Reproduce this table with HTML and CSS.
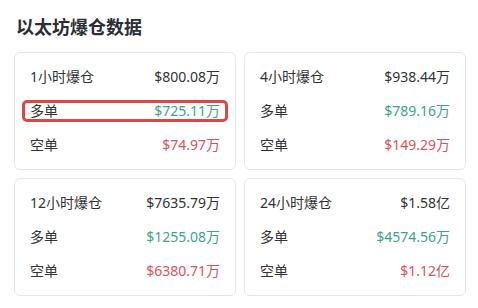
FILE: index.html
```html
<!DOCTYPE html>
<html lang="zh">
<head>
<meta charset="utf-8">
<link rel="stylesheet" href="styles.css">
</head>
<body>
<div class="page">
  <h1 class="title">以太坊爆仓数据</h1>
  <div class="grid">
    <div class="card">
      <div class="row"><span class="label">1小时爆仓</span><span class="val">$800.08万</span></div>
      <div class="row hl"><span class="label">多单</span><span class="val up">$725.11万</span></div>
      <div class="row"><span class="label">空单</span><span class="val down">$74.97万</span></div>
    </div>
    <div class="card">
      <div class="row"><span class="label">4小时爆仓</span><span class="val">$938.44万</span></div>
      <div class="row"><span class="label">多单</span><span class="val up">$789.16万</span></div>
      <div class="row"><span class="label">空单</span><span class="val down">$149.29万</span></div>
    </div>
    <div class="card">
      <div class="row"><span class="label">12小时爆仓</span><span class="val">$7635.79万</span></div>
      <div class="row"><span class="label">多单</span><span class="val up">$1255.08万</span></div>
      <div class="row"><span class="label">空单</span><span class="val down">$6380.71万</span></div>
    </div>
    <div class="card">
      <div class="row"><span class="label">24小时爆仓</span><span class="val">$1.58亿</span></div>
      <div class="row"><span class="label">多单</span><span class="val up">$4574.56万</span></div>
      <div class="row"><span class="label">空单</span><span class="val down">$1.12亿</span></div>
    </div>
  </div>
</div>
</body>
</html>
```

FILE: styles.css
```css
html, body {
  margin: 0;
  padding: 0;
  background: #ffffff;
}
body {
  font-family: "Noto Sans", "Noto Sans CJK SC", sans-serif;
  color: #333333;
}
.page {
  padding: 15px 12px 0 14px;
}
.title {
  margin: 0 0 13px 2px;
  font-size: 18px;
  line-height: 24px;
  font-weight: 700;
  color: #2b2f36;
}
.grid {
  display: grid;
  grid-template-columns: 222px 222px;
  gap: 8px;
}
.card {
  display: flex;
  flex-direction: column;
  gap: 12px;
  border: 1px solid #e6e6e6;
  border-radius: 6px;
  padding: 13px 7px;
}
.row {
  display: flex;
  justify-content: space-between;
  align-items: center;
  height: 22px;
  box-sizing: border-box;
  padding: 0 6px;
  border: 2px solid transparent;
  border-radius: 5px;
  font-size: 14px;
  line-height: 18px;
}
.row.hl {
  border: 3px solid #e04646;
  padding: 0 5px;
}
.label {
  color: #333333;
}
.val {
  color: #333333;
}
.val.up {
  color: #3ba58b;
}
.val.down {
  color: #e0505c;
}
```
